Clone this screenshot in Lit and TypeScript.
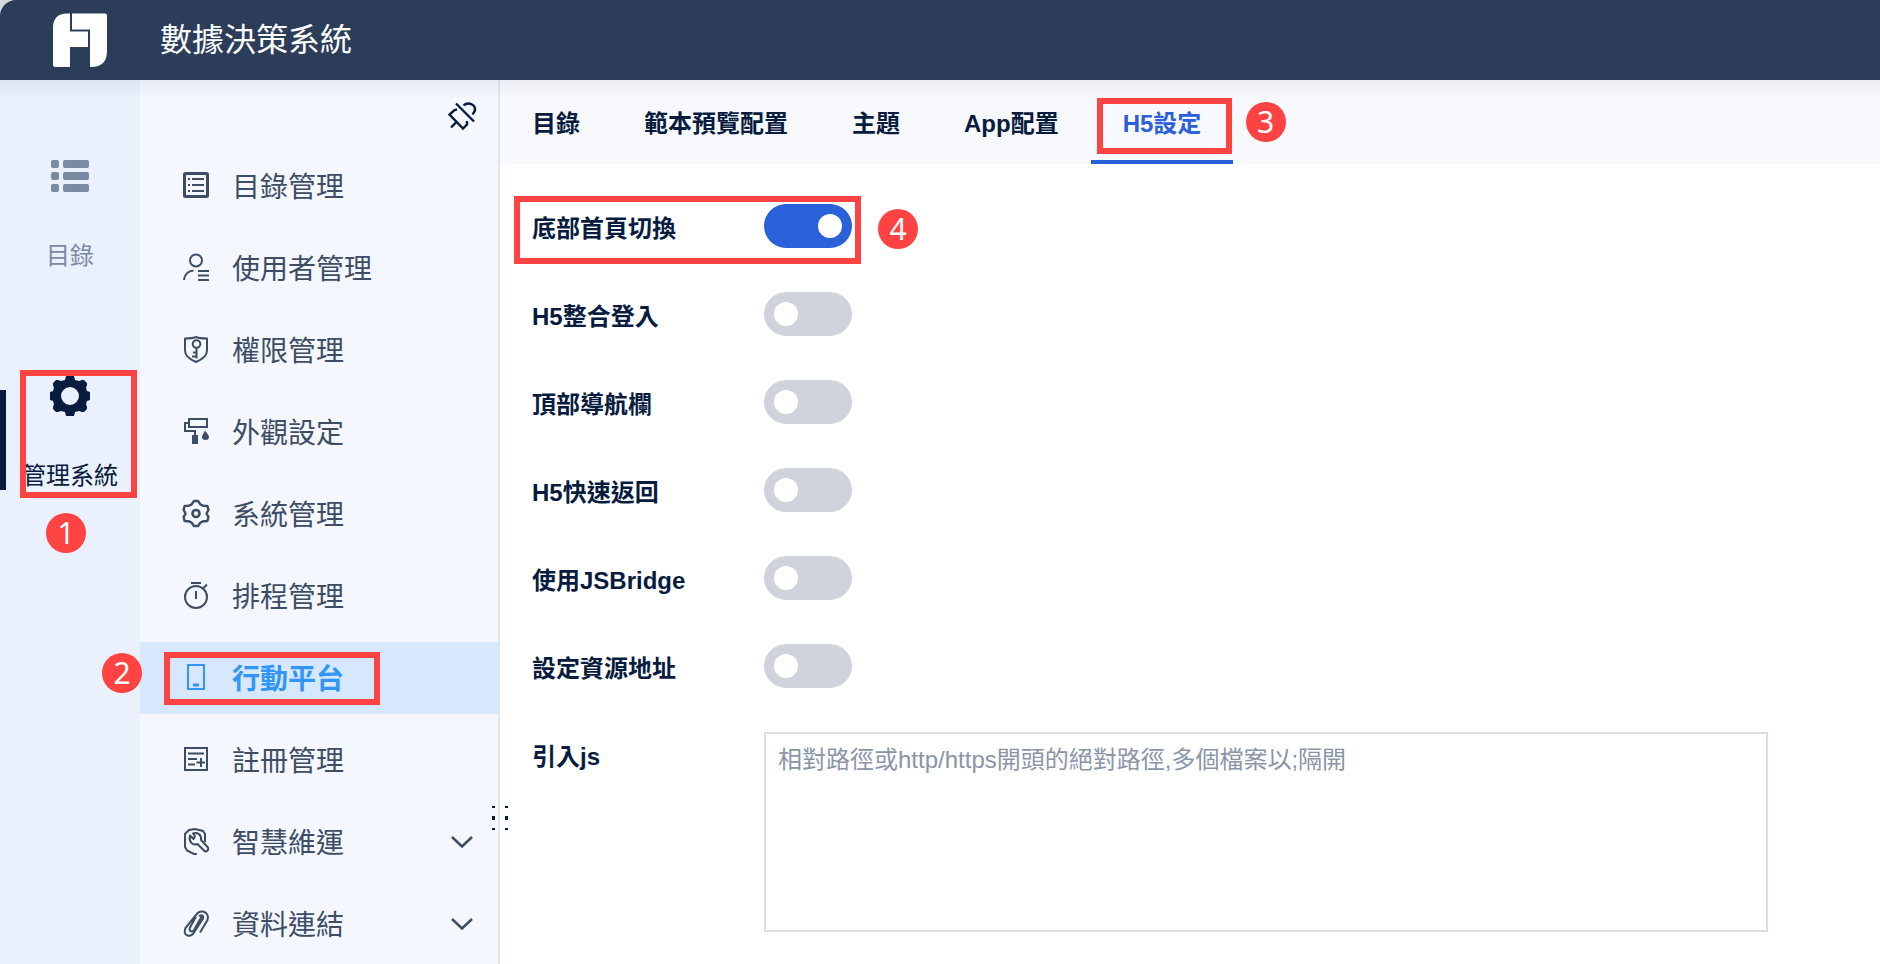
import { LitElement, html, css, svg } from "lit";
import { customElement, state } from "lit/decorators.js";
import { classMap } from "lit/directives/class-map.js";

const icons: Record<string, unknown> = {
  catalog: svg`<rect x="1.5" y="1.5" width="23" height="23" rx="1" stroke-width="3"/><path d="M9 7h12M9 13h12M9 19h12" stroke-width="2"/><path d="M5 7h2M5 13h2M5 19h2" stroke-width="2"/>`,
  user: svg`<circle cx="13" cy="6.5" r="6"/><path d="M1 26c.5-5 4-9 9.500-9.500M15 17h11M15 21.500h11M15 26h11"/>`,
  shield: svg`<path d="M13 1c3 1.200 7 1.500 11 1.500v12c0 5-5 9-11 11.500C7 23.500 2 19.500 2 14.500v-12c4 0 8-.3 11-1.500z" stroke-linejoin="round"/><circle cx="13.500" cy="8" r="3.800"/><path d="M13.500 12v10.500M13 16.500h-3M13 20.500h-4"/>`,
  roller: svg`<path d="M6 1h18v8H6zM6 5H2v8h10v5"/><path d="M9 17h6v9H9zM22 12.500c1.500 2.500 4 4.500 4 6.500a3.500 3 0 0 1-7 0c0-2 2-4 3-6.500z" fill="currentColor" stroke="none"/>`,
  gear: svg`<path d="M11 1h4l2.500 3.500 2.500 1.200 4.300.2 1.200 4-2 3.600 2 3.600-1.200 4-4.300.2-2.500 1.200L15 26h-4l-2.500-3.500L6 21.300l-4.300-.2L.6 17.100l2-3.600-2-3.600 1.100-4L6 5.700l2.500-1.200z" stroke-linejoin="round" stroke-width="2.400"/><circle cx="13" cy="13.500" r="3.500" stroke-width="2.600"/>`,
  timer: svg`<circle cx="13" cy="15" r="11"/><path d="M8 1h10M13 9v8M20 6.500l4-4"/>`,
  mobile: svg`<path d="M5 1h16v24H5z"/><path d="M10 21h6" stroke-width="3"/>`,
  register: svg`<path d="M2 2h22v22H2zM5 7.500h16M5 13h9M5 18.500h7M18 12v9M13.500 16.500H22"/>`,
  wrench: svg`<path d="M14 26h-3L4 22.500 2 19V6l4-4 6-1 8 2 2 3v8"/><path d="M7 7.500l3.500 3.500 1.500-3-2-2.500c4-1.500 9 1 8 6.500l7 7.500c1 3-2 5-4 3L14.500 16C9 18 5.500 13 7 7.500z" stroke-linejoin="round"/>`,
  clip: svg`<path d="M13 6.500L7 17.500c-1.500 4 2 5 4 2.500l8-14M17 22.500l7.500-12.500c1.500-4-.5-7.500-4.500-8.500-3-.5-5.500 1-7 3.500L2.500 18c-1.500 3.500-1 6.500 2 7.500 3 1 5-.5 6.500-3l9-14c1-3-2-4.500-4-2"/>`,
};

const menu = [
  { icon: "catalog", label: "目錄管理" },
  { icon: "user", label: "使用者管理" },
  { icon: "shield", label: "權限管理" },
  { icon: "roller", label: "外觀設定" },
  { icon: "gear", label: "系統管理" },
  { icon: "timer", label: "排程管理" },
  { icon: "mobile", label: "行動平台", mark: true },
  { icon: "register", label: "註冊管理" },
  { icon: "wrench", label: "智慧維運", more: true },
  { icon: "clip", label: "資料連結", more: true },
];

const tabs = ["目錄", "範本預覽配置", "主題", "App配置", "H5設定"];

@customElement("app-root")
export class AppRoot extends LitElement {
  static styles = css`
    :host {
      display: flex;
      flex-direction: column;
      height: 100vh;
      overflow: hidden;
      background: #fff;
      color: #081c40;
      font-family: "Liberation Sans", "Noto Sans CJK TC", sans-serif;
      font-size: 24px;
      line-height: 32px;
    }
    * { box-sizing: border-box; }
    button { font: inherit; color: inherit; background: none; border: 0; padding: 0; margin: 0; }
    svg { display: block; flex: none; fill: none; stroke: currentColor; stroke-width: 2; overflow: visible; }
    .corner { flex: none; background: #d8d9da; }
    .header {
      height: 80px;
      display: flex;
      align-items: center;
      padding-left: 53px;
      gap: 53px;
      background: #2c3d59;
      border-top-left-radius: 16px;
      color: #fff;
    }
    .logo { fill: #fff; stroke: none; }
    .title { margin: 0; font-size: 32px; font-weight: 400; line-height: 48px; }
    .body { position: relative; flex: 1; min-height: 0; display: flex; }
    .shade {
      position: absolute;
      inset: 0 0 auto 0;
      height: 20px;
      background: linear-gradient(rgba(30, 40, 70, 0.06), rgba(30, 40, 70, 0));
      pointer-events: none;
    }
    .rail { flex: none; width: 140px; background: #eaf0fc; padding-top: 40px; display: flex; flex-direction: column; gap: 60px; }
    .rail-item {
      position: relative;
      height: 160px;
      display: flex;
      flex-direction: column;
      align-items: center;
      justify-content: space-between;
      padding: 36px 0 8px;
      color: #7b8aa3;
      white-space: nowrap;
    }
    .rail-item svg { width: 40px; height: 40px; }
    .rail-item.on { color: #081c40; }
    .rail-item.on::before { content: ""; position: absolute; left: 0; top: 50px; width: 6px; height: 100px; background: currentColor; }
    .side {
      position: relative;
      flex: none;
      width: 360px;
      background: #f4f7fe;
      border-right: 2px solid #e1e5ee;
      color: #3d4d66;
    }
    .pinbar { height: 70px; display: flex; justify-content: flex-end; padding: 22px 22px 0 0; color: #081c40; }
    .pin { width: 28px; height: 28px; }
    .menu { display: flex; flex-direction: column; gap: 10px; }
    .item {
      position: relative;
      flex: none;
      height: 72px;
      display: flex;
      align-items: center;
      padding: 0 25px 0 43px;
      gap: 23px;
      font-size: 28px;
      text-align: left;
    }
    .item .name { flex: 1; padding-top: 4px; line-height: 40px; }
    .item.on { background: #d7e7fd; color: #3296f7; font-weight: 700; }
    .grip {
      position: absolute;
      left: 352px;
      top: 726px;
      display: grid;
      grid-template-columns: 3px 3px;
      gap: 8px 10px;
      align-items: center;
    }
    .grip i { height: 2px; background: #081c40; }
    .grip i.tall { height: 4px; }
    .main { flex: 1; min-width: 0; }
    .tabs { display: flex; height: 84px; background: #f8f9fd; }
    .tab {
      position: relative;
      padding: 8px 32px 0;
      font-weight: 700;
      border-bottom: 4px solid transparent;
    }
    .tab.on { color: #2b60db; border-color: currentColor; }
    .form { padding: 40px 112px 0 32px; display: flex; flex-direction: column; gap: 44px; }
    .row { position: relative; display: flex; align-items: flex-start; }
    .label { flex: none; width: 232px; padding-top: 9px; font-weight: 700; }
    .switch {
      appearance: none;
      margin: 0;
      width: 88px;
      height: 44px;
      border-radius: 22px;
      background: #d0d3db;
      padding: 10px;
      display: flex;
    }
    .switch::before { content: ""; width: 24px; height: 24px; border-radius: 50%; background: #fff; }
    .switch:checked { background: #2b60db; justify-content: flex-end; }
    .area {
      flex: 1;
      min-width: 0;
      height: 200px;
      border: 2px solid #d9dde4;
      padding: 10px 12px;
      font: inherit;
      resize: none;
      background: #fff;
      outline: none;
    }
    .area::placeholder { color: #8a95a8; opacity: 1; }
    .frame { position: absolute; border: 6px solid #ff4343; pointer-events: none; }
    .badge {
      position: absolute;
      width: 40px;
      height: 40px;
      border-radius: 50%;
      background: #ff4343;
      color: #fff;
      font: 400 30px/40px "Noto Sans", sans-serif;
      text-align: center;
      pointer-events: none;
      z-index: 1;
    }
    .f1 { left: 20px; top: 30px; width: 117px; height: 128px; }
    .b1 { left: 46px; top: 173px; }
    .f2 { left: 24px; top: 10px; width: 216px; height: 53px; }
    .b2 { left: -38px; top: 11px; }
    .f3 { left: 6px; top: 18px; width: 135px; height: 56px; }
    .b3 { left: 155px; top: 22px; }
    .f4 { left: -18px; top: -8px; width: 347px; height: 68px; }
    .b4 { left: 346px; top: 5px; }
  `;

  @state() private section = "行動平台";
  @state() private tab = "H5設定";

  private switches = [
    { label: "底部首頁切換", on: true },
    { label: "H5整合登入", on: false },
    { label: "頂部導航欄", on: false },
    { label: "H5快速返回", on: false },
    { label: "使用JSBridge", on: false },
    { label: "設定資源地址", on: false },
  ];

  render() {
    return html`
      <div class="corner">
        <header class="header">
          <svg class="logo" width="54" height="54" viewBox="0 0 54 54">
            <path d="M14 .5H17V18.500H35V34H17V54H2Q0 54 0 52V15Q0 .5 14 .5z" />
            <path d="M19 .5H52Q54 .5 54 2.500V38Q54 54 38 54H37V16.500H19z" />
          </svg>
          <h1 class="title">數據決策系統</h1>
        </header>
      </div>
      <div class="body">
        <nav class="rail">
          <button class="rail-item">
            <svg viewBox="0 0 40 40"><g fill="currentColor" stroke="none">
              <rect x="1" y="4" width="8" height="8" rx="2" /><rect x="13" y="4" width="26" height="8" rx="2" />
              <rect x="1" y="16" width="8" height="8" rx="2" /><rect x="13" y="16" width="26" height="8" rx="2" />
              <rect x="1" y="28" width="8" height="8" rx="2" /><rect x="13" y="28" width="26" height="8" rx="2" />
            </g></svg>
            <span>目錄</span>
          </button>
          <button class="rail-item on">
            <svg viewBox="0 0 40 40"><path fill="currentColor" stroke="none" fill-rule="evenodd"
              d="M16 0h8l1 4 4 1 3-1h2l3 3v2l-1 3 1 3 3 1v8l-3 1-1 3 1 3v2l-3 3h-2l-3-1-4 1-1 4h-8l-1-4-4-1-3 1H6l-3-3v-2l1-3-1-3-3-1v-8l3-1 1-3-1-3V7l3-3h2l3 1 4-1zM20 11a9 9 0 1 0 0 18a9 9 0 1 0 0-18z" /></svg>
            <span>管理系統</span>
            <span class="frame f1"></span><span class="badge b1">1</span>
          </button>
        </nav>
        <aside class="side">
          <div class="pinbar">
            <button class="pin" aria-label="取消固定">
              <svg width="28" height="28" viewBox="0 0 28 28"><path stroke-width="2.400" d="M8 1.500l18 18M3 25.500l6.500-6.500M9 7.500L6.500 8 1.500 12.500 15 26.500l4-4v-3.500M15.500 3.500c3-3 7.500-2.500 10 0s1.500 6-1 9" /></svg>
            </button>
          </div>
          <nav class="menu">
            ${menu.map((m) => html`
              <button class=${classMap({ item: true, on: m.label === this.section })} @click=${() => (this.section = m.label)}>
                <svg width="26" height="28" viewBox="0 0 26 28">${icons[m.icon]}</svg>
                <span class="name">${m.label}</span>
                ${m.more ? html`<svg width="22" height="12" viewBox="0 0 22 12"><path d="M1 1l10 9.500L21 1" stroke-width="2.500" /></svg>` : ""}
                ${m.mark ? html`<span class="frame f2"></span><span class="badge b2">2</span>` : ""}
              </button>`)}
          </nav>
          <div class="grip"><i></i><i></i><i class="tall"></i><i class="tall"></i><i></i><i></i></div>
        </aside>
        <main class="main">
          <div class="tabs" role="tablist">
            ${tabs.map((t, i) => html`
              <button role="tab" class=${classMap({ tab: true, on: t === this.tab })} @click=${() => (this.tab = t)}>
                ${t}${i === 4 ? html`<span class="frame f3"></span><span class="badge b3">3</span>` : ""}
              </button>`)}
          </div>
          <form class="form">
            ${this.switches.map((s, i) => html`
              <div class="row">
                <label class="label" for="s${i}">${s.label}</label>
                <input class="switch" id="s${i}" type="checkbox" role="switch" .checked=${s.on} />
                ${i === 0 ? html`<span class="frame f4"></span><span class="badge b4">4</span>` : ""}
              </div>`)}
            <div class="row">
              <label class="label" for="js">引入js</label>
              <textarea class="area" id="js" placeholder="相對路徑或http/https開頭的絕對路徑,多個檔案以;隔開"></textarea>
            </div>
          </form>
        </main>
        <div class="shade"></div>
      </div>
    `;
  }
}
